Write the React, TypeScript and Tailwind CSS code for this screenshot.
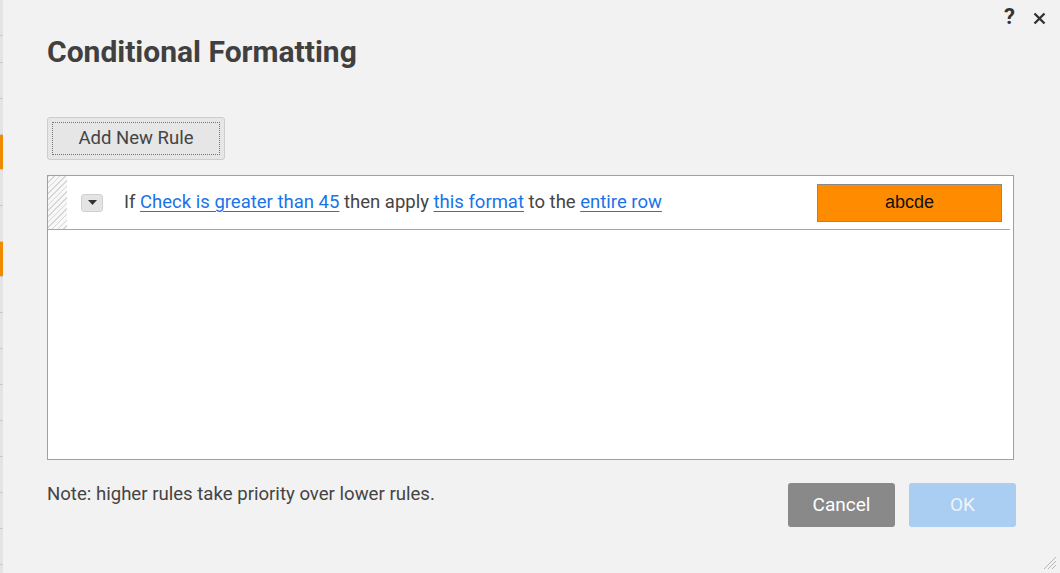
import React from "react";

// Thin slice of the sheet behind the dialog
const SHEET_ROWS = [
  { h: 36, orange: false },
  { h: 27, orange: false },
  { h: 36, orange: false },
  { h: 36, orange: false },
  { h: 35, orange: true },
  { h: 36, orange: false },
  { h: 36, orange: false },
  { h: 35, orange: true },
  { h: 36, orange: false },
  { h: 36, orange: false },
  { h: 36, orange: false },
  { h: 36, orange: false },
  { h: 36, orange: false },
  { h: 36, orange: false },
  { h: 36, orange: false },
  { h: 36, orange: false },
];

function SheetEdge() {
  return (
    <div className="flex w-[3px] shrink-0 flex-col overflow-hidden bg-[#e4e4e4]">
      {SHEET_ROWS.map((r, i) => (
        <div
          key={i}
          style={{ height: r.h }}
          className={
            r.orange
              ? "shrink-0 border-b border-[#c8c8c8] bg-[#f08a00]"
              : "shrink-0 border-b border-[#c8c8c8]"
          }
        />
      ))}
    </div>
  );
}

function Link({ children }: { children: React.ReactNode }) {
  return <span className="text-[#1a73e8] underline underline-offset-[3px] decoration-1">{children}</span>;
}

function RuleRow() {
  return (
    <div className="mr-[3px] flex h-[54px] items-center border-b border-[#a6a6a6]">
      <div className="h-full w-[19px] shrink-0 bg-[image:repeating-linear-gradient(135deg,#d6d6d6_0_1px,#f8f8f8_1px_4px)]" />
      <button className="ml-[14px] flex h-[18px] w-[22px] items-center justify-center rounded-[3px] border border-[#d0d0d0] bg-[#e4e4e4]">
        <svg width="9" height="5" viewBox="0 0 9 5">
          <path d="M0 0h9L4.5 5z" fill="#333" />
        </svg>
      </button>
      <p className="ml-[21px] text-[18.5px] text-[#444]">
        If <Link>Check is greater than 45</Link> then apply <Link>this format</Link> to the{" "}
        <Link>entire row</Link>
      </p>
      <div className="ml-auto mr-[8px] flex h-[38px] w-[185px] items-center justify-center border border-[#8a8a8a] bg-[#ff8c00] font-['Liberation_Sans',sans-serif] text-[18px] text-[#111]">
        abcde
      </div>
    </div>
  );
}

export default function App() {
  return (
    <div className="flex h-[573px] w-[1060px] overflow-hidden bg-[#f2f2f2] font-['Roboto',sans-serif]">
      <SheetEdge />
      <div className="flex flex-1 flex-col">
        {/* Help and close */}
        <div className="flex h-[37px] items-start justify-end gap-[18px] pr-[14px] pt-[4px] text-[#333]">
          <span className="text-[22px] font-bold leading-[26px]">?</span>
          <svg width="13" height="13" viewBox="0 0 13 13" className="mt-[8px]">
            <path d="M1.5 1.5l10 10M11.5 1.5l-10 10" stroke="#333" strokeWidth="2.4" />
          </svg>
        </div>

        <div className="flex flex-1 flex-col pl-[44px] pr-[46px]">
          <h1 className="text-[30px] font-bold leading-[30px] text-[#404040]">Conditional Formatting</h1>

          <div className="mt-[50px]">
            <button className="flex h-[43px] w-[178px] items-center justify-center rounded-[3px] border border-[#cdcdcd] bg-[#e6e6e6] p-[4px]">
              <span className="flex h-full w-full items-center justify-center border border-dotted border-[#777] pt-[1px] text-[18.5px] text-[#444]">
                Add New Rule
              </span>
            </button>
          </div>

          <div className="mt-[15px] h-[285px] border border-[#a0a0a0] bg-white">
            <RuleRow />
          </div>

          <div className="mt-[23px] flex items-start justify-between">
            <p className="text-[18.6px] leading-[22px] text-[#444]">Note: higher rules take priority over lower rules.</p>
            <div className="flex gap-[14px]">
              <button className="h-[44px] w-[107px] rounded-[3px] bg-[#898989] text-[19px] text-white">Cancel</button>
              <button className="-mr-[2px] h-[44px] w-[107px] rounded-[3px] bg-[#aacdf2] text-[19px] text-[#eef4fc]">OK</button>
            </div>
          </div>

          <div className="mt-auto -mr-[43px] flex justify-end pb-[3px]">
            <svg width="16" height="16" viewBox="0 0 16 16">
              <path d="M15 3L3 15M15 7L7 15M15 11L11 15" stroke="#b5b5b5" strokeWidth="1" />
            </svg>
          </div>
        </div>
      </div>
    </div>
  );
}
